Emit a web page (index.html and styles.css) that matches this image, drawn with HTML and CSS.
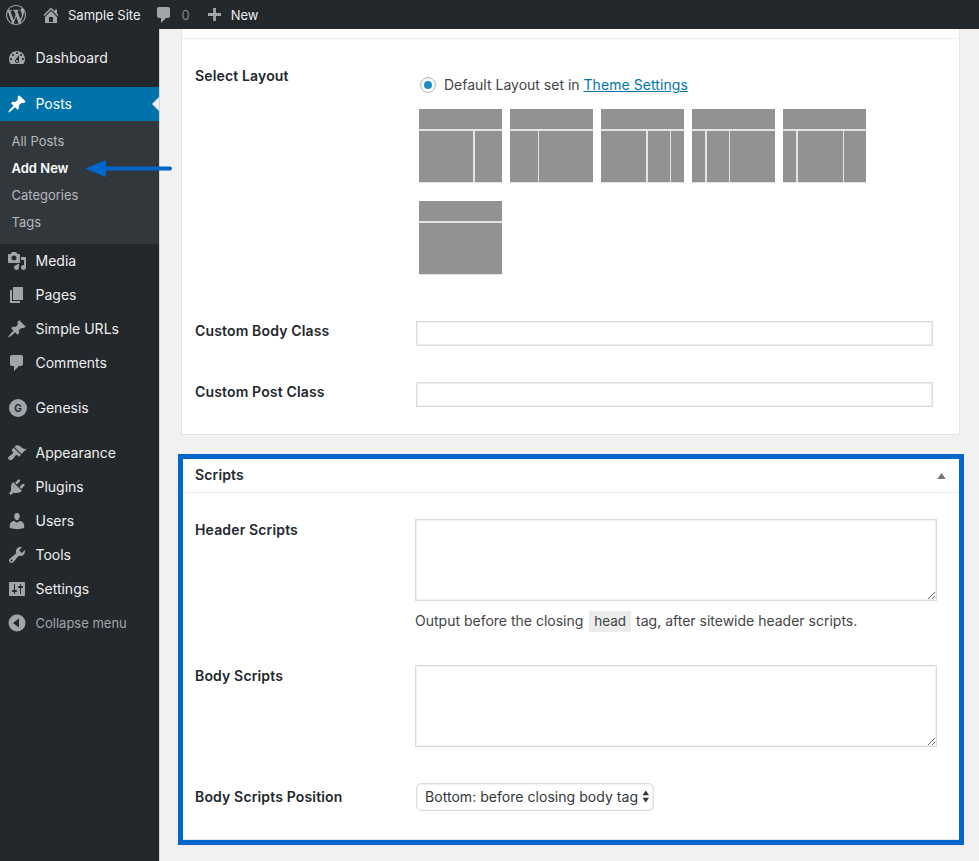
FILE: index.html
```html
<!DOCTYPE html>
<html lang="en">
<head>
<meta charset="utf-8">
<title>Add New Post</title>
<link rel="stylesheet" href="styles.css">
</head>
<body>
<header class="adminbar">
  <svg class="bar-logo" viewBox="0 0 20 20"><path d="M20 10c0-5.51-4.49-10-10-10C4.48 0 0 4.49 0 10c0 5.52 4.48 10 10 10 5.51 0 10-4.48 10-10zM7.78 15.37L4.37 6.22c.55-.02 1.17-.08 1.17-.08.5-.06.44-1.13-.06-1.11 0 0-1.45.11-2.37.11-.18 0-.37 0-.58-.01C4.12 2.69 6.87 1.11 10 1.11c2.33 0 4.45.87 6.05 2.34-.68-.11-1.65.39-1.65 1.58 0 .74.45 1.36.9 2.1.35.61.55 1.36.55 2.46 0 1.49-1.4 5-1.4 5l-3.03-8.37c.54-.02.82-.17.82-.17.5-.05.44-1.25-.06-1.22 0 0-1.44.12-2.38.12-.87 0-2.33-.12-2.33-.12-.5-.03-.56 1.2-.06 1.22l.92.08 1.26 3.41zM17.41 10c.24-.64.74-1.87.43-4.25.7 1.29 1.05 2.71 1.05 4.25 0 3.29-1.73 6.24-4.4 7.78.97-2.59 1.94-5.2 2.92-7.78zM6.1 18.09C3.12 16.65 1.11 13.53 1.11 10c0-1.3.23-2.48.72-3.59C3.25 10.3 4.67 14.2 6.1 18.09zm4.03-6.63l2.58 6.98c-.86.29-1.76.45-2.71.45-.79 0-1.57-.11-2.29-.33.81-2.38 1.62-4.74 2.42-7.1z"/></svg>
  <svg class="bar-home" viewBox="0 0 20 20"><path d="M16 8.5l1.53 1.53-1.06 1.06L10 4.62l-6.47 6.47-1.06-1.06L10 2.5l4 4v-2h2v4zm-6-2.46l6 5.99V18H4v-5.97zM12 17v-5H8v5h4z"/></svg>
  <span class="bar-site">Sample Site</span>
  <svg class="bar-comment" viewBox="0 0 20 20"><path d="M5 2h9c1.1 0 2 .9 2 2v7c0 1.1-.9 2-2 2h-2l-5 5v-5H5c-1.1 0-2-.9-2-2V4c0-1.1.9-2 2-2z"/></svg>
  <span class="bar-count">0</span>
  <svg class="bar-plus" viewBox="0 0 14 14"><path d="M5.500 0h3v5.500H14v3H8.500V14h-3V8.500H0v-3h5.500z"/></svg>
  <span class="bar-new">New</span>
</header>

<div class="wrap">
  <nav class="sidebar">
    <ul class="menu">
      <li class="item"><svg class="ico" viewBox="0 0 20 20"><path d="M3.76 16h12.48c1.1-1.37 1.76-3.11 1.76-5 0-4.42-3.58-8-8-8s-8 3.58-8 8c0 1.89.66 3.63 1.76 5zM10 4c.55 0 1 .45 1 1s-.45 1-1 1-1-.45-1-1 .45-1 1-1zM6 6c.55 0 1 .45 1 1s-.45 1-1 1-1-.45-1-1 .45-1 1-1zm8 0c.55 0 1 .45 1 1s-.45 1-1 1-1-.45-1-1 .45-1 1-1zm-5.37 5.55L12 7v6c0 1.1-.9 2-2 2s-2-.9-2-2c0-.57.24-1.08.63-1.45zM4 10c.55 0 1 .45 1 1s-.45 1-1 1-1-.45-1-1 .45-1 1-1zm12 0c.55 0 1 .45 1 1s-.45 1-1 1-1-.45-1-1 .45-1 1-1zm-5 3c0-.55-.45-1-1-1s-1 .45-1 1 .45 1 1 1 1-.45 1-1z" fill-rule="evenodd"/></svg>Dashboard</li>
      <li class="item current sep-top"><svg class="ico" viewBox="0 0 20 20"><path d="M10.44 3.02l1.82-1.82 6.36 6.35-1.83 1.82c-1.05-.68-2.48-.57-3.41.36l-.75.75c-.92.93-1.04 2.35-.35 3.41l-1.83 1.82-2.41-2.41-2.8 2.79c-.42.42-3.38 2.71-3.8 2.29s1.86-3.39 2.28-3.81l2.79-2.79L4.1 9.36l1.83-1.82c1.05.69 2.48.57 3.4-.36l.75-.75c.93-.92 1.05-2.35.36-3.41z"/></svg>Posts</li>
      <li class="submenu">
        <span class="sub">All Posts</span>
        <span class="sub sub-on">Add New</span>
        <span class="sub">Categories</span>
        <span class="sub">Tags</span>
      </li>
      <li class="item"><svg class="ico" viewBox="0 0 20 20"><path d="M13 11V4c0-.55-.45-1-1-1h-1.67L9 1H5L3.67 3H2c-.55 0-1 .45-1 1v7c0 .55.45 1 1 1h10c.55 0 1-.45 1-1zM7 4.500c1.380 0 2.500 1.120 2.500 2.500S8.380 9.500 7 9.500 4.500 8.380 4.500 7 5.620 4.500 7 4.500zM14 6h5v10.500c0 1.380-1.120 2.500-2.500 2.500S14 17.880 14 16.500s1.120-2.500 2.500-2.500c.17 0 .34.02.5.05V9h-3V6zm-4 8.050V13h2v3.500c0 1.380-1.120 2.500-2.500 2.500S7 17.880 7 16.500 8.120 14 9.500 14c.17 0 .34.02.5.05z" fill-rule="evenodd"/></svg>Media</li>
      <li class="item"><svg class="ico" viewBox="0 0 20 20"><path d="M6 15V2h10v13H6zm-1 1h8v2H3V5h2v11z"/></svg>Pages</li>
      <li class="item"><svg class="ico" viewBox="0 0 20 20"><path d="M10.44 3.02l1.82-1.82 6.36 6.35-1.83 1.82c-1.05-.68-2.48-.57-3.41.36l-.75.75c-.92.93-1.04 2.35-.35 3.41l-1.83 1.82-2.41-2.41-2.8 2.79c-.42.42-3.38 2.71-3.8 2.29s1.86-3.39 2.28-3.81l2.79-2.79L4.1 9.36l1.83-1.82c1.05.69 2.48.57 3.4-.36l.75-.75c.93-.92 1.05-2.35.36-3.41z"/></svg>Simple URLs</li>
      <li class="item"><svg class="ico" viewBox="0 0 20 20"><path d="M5 2h9c1.100 0 2 .9 2 2v7c0 1.100-.9 2-2 2h-2l-5 5v-5H5c-1.100 0-2-.9-2-2V4c0-1.100.9-2 2-2z"/></svg>Comments</li>
      <li class="item sep-mid"><span class="genesis">G</span>Genesis</li>
      <li class="item sep-mid"><svg class="ico" viewBox="0 0 20 20"><path d="M14.480 11.060L7.410 3.990l1.500-1.500c.5-.56 2.300-.47 3.510.32 1.210.8 1.430 1.280 2.910 2.100 1.180.64 2.450 1.260 4.450.85zm-.71.71L6.700 4.700 4.930 6.470c-.39.39-.39 1.020 0 1.410l1.060 1.060c.39.39.39 1.030 0 1.420-.6.6-1.430 1.110-2.210 1.690-.35.26-.7.53-1.010.84C1.430 13.230.4 15.230 1.700 16.530c1.300 1.290 3.300.27 4.640-1.040.31-.31.58-.66.85-1.020.57-.78 1.080-1.610 1.690-2.210.39-.39 1.020-.39 1.410 0l1.060 1.060c.39.39 1.020.39 1.410 0z"/></svg>Appearance</li>
      <li class="item"><svg class="ico" viewBox="0 0 20 20"><path d="M13.110 4.360L9.870 7.600 8 5.730l3.240-3.240c.35-.34 1.050-.2 1.560.32.52.51.66 1.210.31 1.550zm-8 1.770l.91-1.120 9.010 9.010-1.190.84c-.71.71-2.630 1.160-3.820 1.160H6.140L4.900 17.260c-.59.59-1.540.59-2.120 0-.59-.58-.59-1.530 0-2.120l1.240-1.240v-3.880c0-1.130.4-3.190 1.090-3.890zm7.260 3.970l3.240-3.240c.34-.35 1.040-.21 1.550.31.52.51.66 1.210.31 1.550l-3.240 3.250z"/></svg>Plugins</li>
      <li class="item"><svg class="ico" viewBox="0 0 20 20"><path d="M10 9.250c-2.270 0-2.730-3.440-2.730-3.440C7 4.020 7.820 2 9.970 2c2.160 0 2.980 2.020 2.710 3.810 0 0-.41 3.440-2.680 3.440zm0 2.570L12.720 10c2.390 0 4.520 2.330 4.520 4.530v2.490s-3.650 1.130-7.240 1.130c-3.650 0-7.240-1.130-7.240-1.130v-2.490c0-2.250 1.940-4.480 4.470-4.480z"/></svg>Users</li>
      <li class="item"><svg class="ico" viewBox="0 0 20 20"><path d="M16.680 9.770c-1.340 1.340-3.300 1.670-4.950.99l-5.410 6.520c-.99.99-2.590.99-3.580 0s-.99-2.590 0-3.570l6.520-5.420c-.68-1.650-.35-3.610.99-4.950 1.280-1.280 3.120-1.620 4.720-1.060l-2.890 2.890 2.820 2.820 2.860-2.870c.53 1.580.18 3.390-1.080 4.650zM3.810 16.210c.4.39 1.040.39 1.430 0 .4-.4.4-1.040 0-1.430-.39-.4-1.030-.4-1.430 0-.39.39-.39 1.030 0 1.430z" fill-rule="evenodd"/></svg>Tools</li>
      <li class="item"><svg class="ico" viewBox="0 0 20 20"><path d="M18 16V4c0-.55-.45-1-1-1H3c-.55 0-1 .45-1 1v12c0 .55.45 1 1 1h14c.55 0 1-.45 1-1zM8 11h1c.55 0 1 .45 1 1s-.45 1-1 1H8v1.500c0 .28-.22.5-.5.5s-.5-.22-.5-.5V13H6c-.55 0-1-.45-1-1s.45-1 1-1h1V5.500c0-.28.22-.5.5-.5s.5.22.5.5V11zm5-2h-1c-.55 0-1-.45-1-1s.45-1 1-1h1V5.500c0-.28.22-.5.5-.5s.5.22.5.5V7h1c.55 0 1 .45 1 1s-.45 1-1 1h-1v5.500c0 .28-.22.5-.5.5s-.5-.22-.5-.5V9z" fill-rule="evenodd"/></svg>Settings</li>
      <li class="item collapse"><svg class="ico" viewBox="0 0 20 20"><path d="M10 1.500a8.500 8.500 0 1 1 0 17 8.500 8.500 0 0 1 0-17zm2 4l-6 4.500 6 4.500z" fill-rule="evenodd"/></svg>Collapse menu</li>
    </ul>
  </nav>

  <main class="main">
    <section class="box layout-box">
      <div class="box-top"></div>
      <div class="row row-layout">
        <div class="label">Select Layout</div>
        <div class="field field-layout">
          <div class="default-line"><span class="radio"></span>Default Layout set in <a class="link" href="#">Theme Settings</a></div>
          <div class="tiles">
            <div class="tile"><div class="t-head"></div><div class="t-cols"><i class="c54"></i><i class="c28"></i></div></div>
            <div class="tile"><div class="t-head"></div><div class="t-cols"><i class="c28"></i><i class="c54"></i></div></div>
            <div class="tile"><div class="t-head"></div><div class="t-cols"><i class="c45"></i><i class="c22"></i><i class="c14"></i></div></div>
            <div class="tile"><div class="t-head"></div><div class="t-cols"><i class="c14"></i><i class="c22"></i><i class="c45"></i></div></div>
            <div class="tile"><div class="t-head"></div><div class="t-cols"><i class="c14"></i><i class="c45"></i><i class="c22"></i></div></div>
            <div class="tile"><div class="t-head"></div><div class="t-cols"><i class="cfull"></i></div></div>
          </div>
        </div>
      </div>
      <div class="row row-text">
        <div class="label">Custom Body Class</div>
        <div class="field field-text"><input class="text-input" type="text"></div>
      </div>
      <div class="row row-text">
        <div class="label">Custom Post Class</div>
        <div class="field field-text"><input class="text-input" type="text"></div>
      </div>
    </section>

    <section class="frame">
      <div class="frame-head">
        <h2 class="frame-title">Scripts</h2>
        <svg class="toggle" viewBox="0 0 10 7"><path d="M5 0l5 7H0z"/></svg>
      </div>
      <div class="frame-body">
        <div class="srow">
          <div class="label">Header Scripts</div>
          <div class="sfield">
            <textarea class="area"></textarea>
            <p class="help">Output before the closing <code class="code">head</code> tag, after sitewide header scripts.</p>
          </div>
        </div>
        <div class="srow srow-body">
          <div class="label">Body Scripts</div>
          <div class="sfield"><textarea class="area"></textarea></div>
        </div>
        <div class="srow srow-select">
          <div class="label">Body Scripts Position</div>
          <div class="sfield">
            <span class="select-wrap">
              <select class="select"><option>Bottom: before closing body tag</option></select>
              <svg class="select-arrows" viewBox="0 0 8 13"><path d="M4 0l3.500 5.200H.5zM4 13L.5 7.800h7z"/></svg>
            </span>
          </div>
        </div>
      </div>
    </section>
  </main>

  <svg class="callout" viewBox="0 0 87 17"><path d="M0 8.500L21 0v6.500h64a2 2 0 0 1 0 4H21V17z"/></svg>
</div>
</body>
</html>
```

FILE: styles.css
```css
* { box-sizing: border-box; }
html, body { margin: 0; padding: 0; }
body {
  font-family: Inter, "Open Sans", "Liberation Sans", sans-serif;
  font-size: 14px;
  line-height: 20px;
  color: #444;
  background: #f1f1f1;
  width: 979px;
  height: 861px;
  overflow: hidden;
}

/* admin bar */
.adminbar {
  height: 29px;
  background: #23282d;
  color: #eee;
  display: flex;
  align-items: center;
  font-size: 13px;
}
.adminbar svg { fill: #a0a5aa; flex: none; display: block; }
.bar-logo { width: 20px; height: 20px; margin-left: 6px; }
.bar-home { width: 20px; height: 20px; margin-left: 15px; }
.bar-site { margin-left: 7px; }
.bar-comment { width: 20px; height: 20px; margin-left: 13px; }
.bar-count { margin-left: 8px; color: #82878c; }
.bar-plus { width: 13px; height: 13px; margin-left: 18px; }
.bar-new { margin-left: 10px; letter-spacing: -.1px; }

/* layout */
.wrap { position: relative; display: flex; height: 832px; }

/* sidebar */
.sidebar {
  width: 160px;
  flex: none;
  background: #23282d;
  border-right: 1px solid #d4d5d6;
  padding-top: 12px;
}
.menu { list-style: none; margin: 0; padding: 0; }
.item {
  height: 34px;
  display: flex;
  align-items: center;
  padding-left: 7px;
  color: #eee;
  font-size: 14px;
  position: relative;
}
.ico { width: 20px; height: 20px; fill: #a0a5aa; margin-right: 8.500px; flex: none; }
.sep-top { margin-top: 12px; }
.sep-mid { margin-top: 11px; }
.current { background: #0073aa; color: #fff; }
.current .ico { fill: #fff; }
.current::after {
  content: "";
  position: absolute;
  right: 0;
  top: 10px;
  border: 7px solid transparent;
  border-right-color: #f1f1f1;
  border-left-width: 0;
}
.submenu {
  background: #32373c;
  height: 123px;
  padding-top: 7px;
  display: flex;
  flex-direction: column;
}
.sub {
  height: 27px;
  line-height: 27px;
  padding-left: 11.500px;
  font-size: 13px;
  color: #b4b9be;
}
.sub-on { color: #fff; font-weight: 600; }
.genesis {
  width: 18px;
  height: 18px;
  margin: 0 8.500px 0 2px;
  border-radius: 50%;
  background: #a0a5aa;
  color: #23282d;
  font-size: 10px;
  font-weight: 700;
  line-height: 18px;
  text-align: center;
  flex: none;
}
.collapse { color: #a0a5aa; font-size: 13px; }

/* main column */
.main { flex: 1; min-width: 0; padding: 0 15px 16px 18px; }
.box {
  margin: 0 4px 0 3px;
  background: #fff;
  border: 1px solid #e5e5e5;
  border-top: 0;
  padding-bottom: 27px;
  height: 406px;
}
.box-top { height: 10px; border-bottom: 1px solid #eee; }
.row { display: flex; padding-left: 13px; }
.row-layout { padding-top: 26px; }
.row-text { margin-top: 35px; }
.row-layout + .row-text { margin-top: 45px; }
.label {
  width: 221px;
  flex: none;
  padding-top: 1px;
  font-weight: 600;
  color: #23282d;
  font-size: 14px;
  letter-spacing: .15px;
}
.field-layout { padding: 10px 0 0 3px; }
.default-line { display: flex; align-items: center; height: 20px; white-space: pre; }
.radio {
  width: 16px;
  height: 16px;
  margin: 0 8px 0 1px;
  border-radius: 50%;
  border: 1px solid #b4b9be;
  background: #fff;
  box-shadow: inset 0 1px 2px rgba(0, 0, 0, .1);
  position: relative;
}
.radio::after {
  content: "";
  position: absolute;
  left: 3px;
  top: 3px;
  width: 8px;
  height: 8px;
  border-radius: 50%;
  background: #1e8cbe;
}
.link { color: #0073aa; text-decoration: underline; letter-spacing: .07px; }
.tiles {
  display: flex;
  flex-wrap: wrap;
  gap: 18px 8px;
  margin-top: 14px;
  width: 517px;
}
.tile {
  width: 83px;
  height: 74px;
  display: flex;
  flex-direction: column;
  gap: 2px;
  background: #e4e4e4;
  border-bottom: 1px solid #e4e4e4;
}
.t-head { height: 20px; background: #919291; }
.t-cols { flex: 1; display: flex; gap: 1.500px; }
.t-cols i { display: block; background: #919291; }
.c54 { width: 54px; }
.c28 { flex: 1; }
.c45 { width: 45px; }
.c22 { width: 22px; }
.c14 { flex: 1; }
.cfull { flex: 1; }
.text-input, .area {
  display: block;
  padding: 0;
  margin: 0;
  background: #fff;
  border: 1px solid #dcdcdc;
  border-radius: 0;
  box-shadow: inset 0 0 0 1px #f0f0f0;
  outline: 0;
}
.field-text { padding-top: 1px; margin-top: -1px; }
.text-input { width: 517px; height: 25px; margin-top: 1px; }

/* scripts frame */
.frame {
  margin-top: 19px;
  border: 5px solid #0066cc;
  background: #fff;
  height: 391px;
  box-shadow: inset 0 -1px 0 #e5e5e5;
}
.frame-head {
  height: 34px;
  padding: 0 12px 2px;
  border-bottom: 1px solid #eee;
  display: flex;
  align-items: center;
  justify-content: space-between;
}
.frame-title { margin: 0; font-size: 14px; font-weight: 600; color: #23282d; line-height: 20px; letter-spacing: .15px; }
.toggle { width: 9px; height: 6px; fill: #72777c; margin: 3px 1px 0 0; }
.frame-body { padding: 26px 0 0 12px; }
.srow { display: flex; }
.srow .label { width: 220px; }
.srow-body { margin-top: 34px; }
.srow-select { margin-top: 36px; }
.srow-select .label { padding-top: 4px; }
.area { width: 522px; height: 82px; resize: both; }
.help { margin: 9px 0 0; height: 21px; color: #444; line-height: 21px; }
.code {
  display: inline-block;
  height: 21px;
  padding: 0 5px;
  margin: 0 1px 0 2px;
  background: #ececec;
  font-family: Inter, "Open Sans", sans-serif;
  font-size: 13.500px;
  line-height: 21px;
}
.select-wrap { display: block; position: relative; width: 238px; margin-left: 1px; }
.select {
  display: block;
  width: 238px;
  height: 28px;
  padding: 0 0 2px 8px;
  appearance: none;
  -webkit-appearance: none;
  background: #fff;
  border: 1px solid #dedede;
  border-radius: 5px;
  box-shadow: inset 0 0 0 1px #f2f2f2;
  color: #32373c;
  font: 14px Inter, "Open Sans", sans-serif;
  letter-spacing: .04px;
  outline: 0;
}
.select-arrows {
  position: absolute;
  right: 4.500px;
  top: 7px;
  width: 7.500px;
  height: 13px;
  fill: #32373c;
}

/* blue call-out arrow */
.callout {
  position: absolute;
  left: 85px;
  top: 131px;
  width: 87px;
  height: 17px;
  fill: #0066cc;
}
```
